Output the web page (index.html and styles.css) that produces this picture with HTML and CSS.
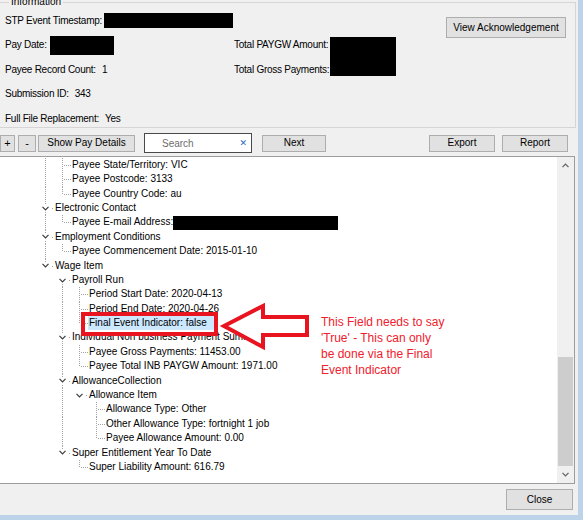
FILE: index.html
```html
<!DOCTYPE html>
<html>
<head>
<meta charset="utf-8">
<title>STP Event</title>
<link rel="stylesheet" href="styles.css">
</head>
<body>
<div class="window">
  <div class="client">
    <fieldset class="info">
      <legend>Information</legend>
      <div class="info-grid">
        <div class="cell row1 col1"><span class="lbl">STP Event Timestamp:</span><span class="redact r-stp"></span></div>
        <div class="ack"><button class="btn btn-ack">View Acknowledgement</button></div>
        <div class="cell row2 col1"><span class="lbl">Pay Date:</span><span class="redact r-pay"></span></div>
        <div class="cell row2 col2"><span class="lbl">Total PAYGW Amount:</span></div>
        <div class="row2 col3"><span class="redact r-paygw"></span></div>
        <div class="cell row3 col1"><span class="lbl">Payee Record Count:</span><span class="val">1</span></div>
        <div class="cell row3 col2"><span class="lbl">Total Gross Payments:</span></div>
        <div class="row3 col3"><span class="redact r-gross"></span></div>
        <div class="cell row4 col1"><span class="lbl">Submission ID:</span><span class="val">343</span></div>
        <div class="cell row5 col1"><span class="lbl">Full File Replacement:</span><span class="val">Yes</span></div>
      </div>
    </fieldset>

    <div class="toolbar">
      <button class="btn tb-plus">+</button>
      <button class="btn tb-minus">-</button>
      <button class="btn tb-show">Show Pay Details</button>
      <div class="search"><span class="ph">Search</span><span class="clear">&#x2715;</span></div>
      <button class="btn tb-next">Next</button>
      <div class="spacer"></div>
      <button class="btn tb-export">Export</button>
      <button class="btn tb-report">Report</button>
    </div>

    <div class="tree-panel">
      <div class="tree">
        <div class="row"><span class="c"></span><span class="c v"></span><span class="c t"></span><span class="tx">Payee State/Territory: VIC</span></div>
        <div class="row"><span class="c"></span><span class="c v"></span><span class="c t"></span><span class="tx">Payee Postcode: 3133</span></div>
        <div class="row"><span class="c"></span><span class="c v"></span><span class="c l"></span><span class="tx">Payee Country Code: au</span></div>
        <div class="row"><span class="c"></span><span class="c x u d"><svg class="chev" width="7" height="5" viewBox="0 0 7 5"><polyline points="0.5,0.8 3.5,3.8 6.5,0.8"/></svg></span><span class="tx">Electronic Contact</span></div>
        <div class="row"><span class="c"></span><span class="c v"></span><span class="c l"></span><span class="tx">Payee E-mail Address:</span><span class="redact r-email"></span></div>
        <div class="row"><span class="c"></span><span class="c x u d"><svg class="chev" width="7" height="5" viewBox="0 0 7 5"><polyline points="0.5,0.8 3.5,3.8 6.5,0.8"/></svg></span><span class="tx">Employment Conditions</span></div>
        <div class="row"><span class="c"></span><span class="c v"></span><span class="c l"></span><span class="tx">Payee Commencement Date: 2015-01-10</span></div>
        <div class="row"><span class="c"></span><span class="c x u"><svg class="chev" width="7" height="5" viewBox="0 0 7 5"><polyline points="0.5,0.8 3.5,3.8 6.5,0.8"/></svg></span><span class="tx">Wage Item</span></div>
        <div class="row"><span class="c"></span><span class="c"></span><span class="c x d"><svg class="chev" width="7" height="5" viewBox="0 0 7 5"><polyline points="0.5,0.8 3.5,3.8 6.5,0.8"/></svg></span><span class="tx">Payroll Run</span></div>
        <div class="row"><span class="c"></span><span class="c"></span><span class="c v"></span><span class="c t"></span><span class="tx">Period Start Date: 2020-04-13</span></div>
        <div class="row"><span class="c"></span><span class="c"></span><span class="c v"></span><span class="c t"></span><span class="tx">Period End Date: 2020-04-26</span></div>
        <div class="row"><span class="c"></span><span class="c"></span><span class="c v"></span><span class="c l"></span><span class="tx sel">Final Event Indicator: false</span></div>
        <div class="row"><span class="c"></span><span class="c"></span><span class="c x u d"><svg class="chev" width="7" height="5" viewBox="0 0 7 5"><polyline points="0.5,0.8 3.5,3.8 6.5,0.8"/></svg></span><span class="tx">Individual Non business Payment Summary</span></div>
        <div class="row"><span class="c"></span><span class="c"></span><span class="c v"></span><span class="c t"></span><span class="tx">Payee Gross Payments: 11453.00</span></div>
        <div class="row"><span class="c"></span><span class="c"></span><span class="c v"></span><span class="c l"></span><span class="tx">Payee Total INB PAYGW Amount: 1971.00</span></div>
        <div class="row"><span class="c"></span><span class="c"></span><span class="c x u d"><svg class="chev" width="7" height="5" viewBox="0 0 7 5"><polyline points="0.5,0.8 3.5,3.8 6.5,0.8"/></svg></span><span class="tx">AllowanceCollection</span></div>
        <div class="row"><span class="c"></span><span class="c"></span><span class="c v"></span><span class="c x"><svg class="chev" width="7" height="5" viewBox="0 0 7 5"><polyline points="0.5,0.8 3.5,3.8 6.5,0.8"/></svg></span><span class="tx">Allowance Item</span></div>
        <div class="row"><span class="c"></span><span class="c"></span><span class="c v"></span><span class="c"></span><span class="c t"></span><span class="tx">Allowance Type: Other</span></div>
        <div class="row"><span class="c"></span><span class="c"></span><span class="c v"></span><span class="c"></span><span class="c t"></span><span class="tx">Other Allowance Type: fortnight 1 job</span></div>
        <div class="row"><span class="c"></span><span class="c"></span><span class="c v"></span><span class="c"></span><span class="c l"></span><span class="tx">Payee Allowance Amount: 0.00</span></div>
        <div class="row"><span class="c"></span><span class="c"></span><span class="c x u"><svg class="chev" width="7" height="5" viewBox="0 0 7 5"><polyline points="0.5,0.8 3.5,3.8 6.5,0.8"/></svg></span><span class="tx">Super Entitlement Year To Date</span></div>
        <div class="row"><span class="c"></span><span class="c"></span><span class="c"></span><span class="c l"></span><span class="tx">Super Liability Amount: 616.79</span></div>
      </div>
      <div class="vscroll">
        <div class="sb-arrow"><svg width="7" height="5" viewBox="0 0 7 5"><polyline points="0.5,4.2 3.5,1.2 6.5,4.2"/></svg></div>
        <div class="sb-track"><div class="sb-thumb"></div></div>
        <div class="sb-arrow"><svg width="7" height="5" viewBox="0 0 7 5"><polyline points="0.5,0.8 3.5,3.8 6.5,0.8"/></svg></div>
      </div>
    </div>

    <div class="footer">
      <button class="btn btn-close">Close</button>
    </div>

    <div class="annot">
      <svg class="annot-svg" width="578" height="515" viewBox="0 0 578 515">
        <rect x="83" y="314" width="133" height="20" fill="none" stroke="#e8141f" stroke-width="4"/>
        <polygon points="224,326 263,306 263,317 307,317 307,335 263,335 263,347" fill="#ffffff" stroke="#e8141f" stroke-width="4" stroke-linejoin="miter"/>
      </svg>
      <div class="note">This Field needs to say<br>'True' - This can only<br>be done via the Final<br>Event Indicator</div>
    </div>
  </div>
</div>
</body>
</html>
```

FILE: styles.css
```css
* { box-sizing: border-box; }

html, body {
  margin: 0;
  padding: 0;
  background: #bcd3ea;
}

body {
  font-family: "Liberation Sans", Arial, sans-serif;
  font-size: 10px;
  color: #000;
}

.window {
  width: 583px;
  height: 520px;
  background: #bcd3ea;
  overflow: hidden;
}

.client {
  position: relative;
  width: 578px;
  height: 515px;
  background: #f0f0f0;
  overflow: hidden;
}

/* ---------- Information group box ---------- */
.info {
  margin: -4px 0 0 -1px;
  padding: 0 0 0 5px;
  width: 577px;
  height: 132px;
  border: 1px solid #d5d5d5;
  min-width: 0;
}

.info legend {
  margin-left: 4px;
  padding: 0 2px;
  font-size: 10px;
  line-height: 12px;
  color: #000;
}

.info-grid {
  display: grid;
  grid-template-columns: 229px 96px 116px 120px;
  grid-template-rows: repeat(5, 24.5px);
  margin-top: -0.25px;
  letter-spacing: -0.25px;
}

.cell {
  display: flex;
  align-items: center;
  white-space: nowrap;
}

.row1 { grid-row: 1; }
.row2 { grid-row: 2; }
.row3 { grid-row: 3; }
.row4 { grid-row: 4; }
.row5 { grid-row: 5; }
.col1 { grid-column: 1; }
.col2 { grid-column: 2; }
.col3 { grid-column: 3; }

.val { margin-left: 6px; }

.redact {
  display: inline-block;
  background: #000;
  flex: none;
}

.r-stp { width: 129px; height: 15px; margin-left: 2px; }
.r-pay { width: 64px; height: 19px; margin-left: 3px; margin-top: 2px; }
.r-paygw { width: 66px; height: 24px; margin-top: 4.75px; }
.r-gross { width: 66px; height: 15px; margin-top: 4.25px; }
.r-email { width: 165px; height: 14px; margin-left: 0; align-self: center; }

.ack {
  grid-column: 4;
  grid-row: 1 / 3;
  align-self: start;
  margin-top: 9.25px;
}

/* ---------- Buttons ---------- */
.btn {
  font-family: "Liberation Sans", Arial, sans-serif;
  font-size: 10px;
  color: #000;
  background: #e1e1e1;
  border: 1px solid #adadad;
  padding: 0;
  margin: 0;
  line-height: 1;
  border-radius: 0;
}

.btn-ack { width: 120px; height: 21px; }

/* ---------- Toolbar ---------- */
.toolbar {
  display: flex;
  align-items: center;
  height: 20px;
  margin-top: 5px;
}

.toolbar .btn { height: 17px; flex: none; }
.tb-plus { width: 15px; font-size: 11px; }
.tb-minus { width: 18px; margin-left: 3px; font-size: 11px; }
.tb-show { width: 97px; margin-left: 2px; }
.tb-next { width: 64px; margin-left: 10px; }
.tb-export { width: 66px; }
.tb-report { width: 66px; margin-left: 7px; margin-right: 10px; }

.spacer { flex: 1; }

.search {
  display: flex;
  align-items: center;
  width: 108px;
  height: 20px;
  margin-left: 9px;
  background: #fff;
  border: 1px solid #4a4a4a;
  padding: 0 4px 0 17px;
  flex: none;
}

.search .ph { color: #6d6d6d; font-size: 10px; }
.search .clear {
  margin-left: auto;
  color: #2b6cc4;
  font-size: 9px;
  font-family: "DejaVu Sans", sans-serif;
}

/* ---------- Tree panel ---------- */
.tree-panel {
  display: flex;
  margin: 3px 0 0 -1px;
  width: 576px;
  height: 328px;
  background: #fff;
  border: 1px solid #9d9d9d;
}

.tree {
  flex: 1;
  padding: 0.8px 0 0 20px;
  overflow: hidden;
}

.row {
  display: flex;
  height: 14.4px;
  white-space: nowrap;
}

.tx {
  line-height: 14.4px;
  padding-left: 1px;
}

.tx.sel {
  background: #cce8ff;
  padding: 0 10px 0 1px;
}

.c {
  flex: none;
  width: 17px;
  height: 14.4px;
  --dv: repeating-linear-gradient(to bottom, #a3a3a3 0 1px, transparent 1px 2px);
  --dh: repeating-linear-gradient(to right, #a3a3a3 0 1px, transparent 1px 2px);
}

.c.v { background: var(--dv) 8px 0 / 1px 100% no-repeat; }
.c.t {
  background:
    var(--dh) 10px 7px / 7px 1px no-repeat,
    var(--dv) 8px 0 / 1px 100% no-repeat;
}
.c.l {
  background:
    var(--dh) 10px 7px / 7px 1px no-repeat,
    var(--dv) 8px 0 / 1px 8px no-repeat;
}

.c.x {
  display: flex;
  align-items: center;
  padding-left: 5px;
  background: var(--dh) 15px 7px / 1px 1px no-repeat;
}
.c.x.u {
  background:
    var(--dh) 15px 7px / 1px 1px no-repeat,
    var(--dv) 8px 0 / 1px 4px no-repeat;
}
.c.x.d {
  background:
    var(--dh) 15px 7px / 1px 1px no-repeat,
    var(--dv) 8px 11px / 1px 4px no-repeat;
}
.c.x.u.d {
  background:
    var(--dh) 15px 7px / 1px 1px no-repeat,
    var(--dv) 8px 0 / 1px 4px no-repeat,
    var(--dv) 8px 11px / 1px 4px no-repeat;
}

.chev { display: block; }
.chev polyline,
.sb-arrow polyline {
  fill: none;
  stroke: #3a3a3a;
  stroke-width: 1.2;
}

/* ---------- Scrollbar ---------- */
.vscroll {
  width: 17px;
  flex: none;
  display: flex;
  flex-direction: column;
  background: #f0f0f0;
}

.sb-arrow {
  height: 17px;
  display: flex;
  align-items: center;
  justify-content: center;
}

.sb-arrow polyline { stroke: #606060; }

.sb-track {
  flex: 1;
  display: flex;
  flex-direction: column;
  justify-content: flex-end;
  padding: 0 1px;
}

.sb-thumb {
  height: 109px;
  background: #cdcdcd;
}

/* ---------- Footer ---------- */
.footer {
  display: flex;
  justify-content: flex-end;
  padding: 5px 5px 0 0;
}

.btn-close { width: 67px; height: 21px; }

/* ---------- Annotation overlay ---------- */
.annot {
  position: absolute;
  left: 0;
  top: 0;
  width: 578px;
  height: 515px;
  pointer-events: none;
}

.annot-svg { display: block; }

.note {
  position: absolute;
  left: 321px;
  top: 314px;
  font-family: "Liberation Sans", Arial, sans-serif;
  font-size: 12px;
  line-height: 16px;
  color: #f0202c;
  white-space: nowrap;
}
```
